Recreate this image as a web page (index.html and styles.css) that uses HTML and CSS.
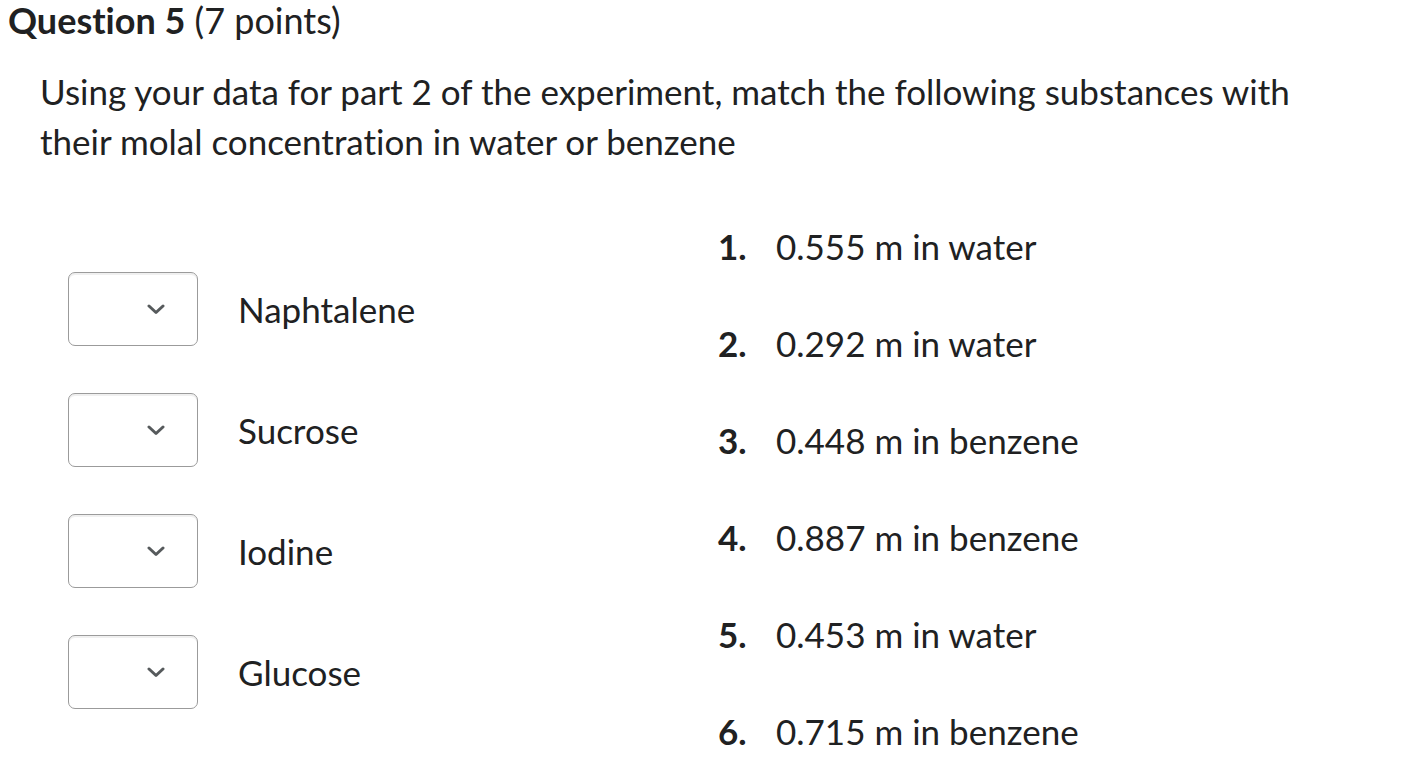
FILE: index.html
```html
<!DOCTYPE html>
<html>
<head>
<meta charset="utf-8">
<link rel="stylesheet" href="styles.css">
</head>
<body>
<div class="page">
  <h1 class="title"><span class="title-strong">Question 5</span> (7 points)</h1>
  <p class="prompt">Using your data for part 2 of the experiment, match the following substances with their molal concentration in water or benzene</p>
  <div class="match">
    <div class="left">
      <div class="row"><div class="select"><svg class="chev" width="18" height="12" viewBox="0 0 18 12"><path d="M2 3 L9 9.5 L16 3" fill="none" stroke="#565a5c" stroke-width="3" stroke-linecap="round" stroke-linejoin="round"/></svg></div><span class="label">Naphtalene</span></div>
      <div class="row"><div class="select"><svg class="chev" width="18" height="12" viewBox="0 0 18 12"><path d="M2 3 L9 9.5 L16 3" fill="none" stroke="#565a5c" stroke-width="3" stroke-linecap="round" stroke-linejoin="round"/></svg></div><span class="label">Sucrose</span></div>
      <div class="row"><div class="select"><svg class="chev" width="18" height="12" viewBox="0 0 18 12"><path d="M2 3 L9 9.5 L16 3" fill="none" stroke="#565a5c" stroke-width="3" stroke-linecap="round" stroke-linejoin="round"/></svg></div><span class="label">Iodine</span></div>
      <div class="row"><div class="select"><svg class="chev" width="18" height="12" viewBox="0 0 18 12"><path d="M2 3 L9 9.5 L16 3" fill="none" stroke="#565a5c" stroke-width="3" stroke-linecap="round" stroke-linejoin="round"/></svg></div><span class="label">Glucose</span></div>
    </div>
    <ol class="right">
      <li class="item"><span class="num">1.</span><span>0.555 m in water</span></li>
      <li class="item"><span class="num">2.</span><span>0.292 m in water</span></li>
      <li class="item"><span class="num">3.</span><span>0.448 m in benzene</span></li>
      <li class="item"><span class="num">4.</span><span>0.887 m in benzene</span></li>
      <li class="item"><span class="num">5.</span><span>0.453 m in water</span></li>
      <li class="item"><span class="num">6.</span><span>0.715 m in benzene</span></li>
    </ol>
  </div>
</div>
</body>
</html>
```

FILE: styles.css
```css
html, body {
  margin: 0;
  padding: 0;
  background: #ffffff;
}
body {
  font-family: Lato, "Noto Sans", sans-serif;
  color: #202122;
  overflow: hidden;
  font-variant-ligatures: none;
}
.page {
  padding: 0 0 0 8px;
  width: 1396px;
  height: 770px;
}
.title {
  margin: 0;
  font-size: 36px;
  font-weight: 400;
  line-height: 40px;
}
.title-strong {
  font-weight: 700;
}
.prompt {
  margin: 26px 0 0 32px;
  font-size: 35px;
  line-height: 50px;
  width: 1300px;
}
.match {
  display: flex;
  margin-top: 55px;
  margin-left: 32px;
}
.left {
  width: 678px;
  padding-top: 51px;
  display: flex;
  flex-direction: column;
  gap: 47px;
}
.row {
  display: flex;
  align-items: center;
  margin-left: 28px;
}
.select {
  height: 72px;
  border: 1px solid #9b9b9b;
  border-radius: 7px;
  box-shadow: inset 0 2px 0 #f0f0f0;
  display: flex;
  align-items: center;
  justify-content: flex-end;
  padding-right: 32px;
  box-sizing: content-box;
  width: 96px;
}
.label {
  margin-left: 40px;
  font-size: 35px;
}
.right {
  list-style: none;
  margin: 0;
  padding: 0;
  display: flex;
  flex-direction: column;
  gap: 47px;
}
.item {
  display: flex;
  font-size: 35px;
  line-height: 50px;
}
.num {
  font-weight: 700;
  width: 58px;
}
```
